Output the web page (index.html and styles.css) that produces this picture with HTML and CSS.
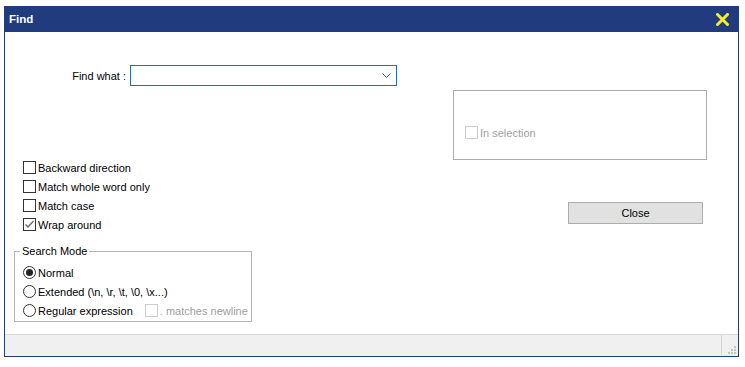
FILE: index.html
```html
<!DOCTYPE html>
<html>
<head>
<meta charset="utf-8">
<link rel="stylesheet" href="styles.css">
</head>
<body>
<div class="window">
  <div class="titlebar">
    <span class="title">Find</span>
    <svg class="xbtn" width="13" height="13" viewBox="0 0 13 13"><path d="M1.5 1.5 L11.5 11.5 M11.5 1.5 L1.5 11.5" stroke="#f7ec2b" stroke-width="3" stroke-linecap="square"/></svg>
  </div>
  <div class="frame">
    <div class="content">
      <div class="left">
        <div class="find-row">
          <span class="find-label">Find what :</span>
          <div class="combo">
            <svg class="chev" width="9" height="6" viewBox="0 0 9 6"><polyline points="0.5,0.5 4.5,4.5 8.5,0.5" fill="none" stroke="#555" stroke-width="1"/></svg>
          </div>
        </div>
        <div class="options">
          <div class="row"><span class="cb"></span><span>Backward direction</span></div>
          <div class="row"><span class="cb"></span><span>Match whole word only</span></div>
          <div class="row"><span class="cb"></span><span>Match case</span></div>
          <div class="row"><span class="cb checked"><svg width="11" height="11" viewBox="0 0 11 11"><polyline points="1.5,5.5 4,8 9.5,2" fill="none" stroke="#6b6b6b" stroke-width="1.4"/></svg></span><span>Wrap around</span></div>
        </div>
        <fieldset class="mode">
          <legend>Search Mode</legend>
          <div class="row"><span class="rb on"></span><span>Normal</span></div>
          <div class="row"><span class="rb"></span><span>Extended (\n, \r, \t, \0, \x...)</span></div>
          <div class="row"><span class="rb"></span><span>Regular expression</span><span class="cb disabled newline"></span><span class="dis">. matches newline</span></div>
        </fieldset>
      </div>
      <div class="right">
        <div class="scope">
          <div class="row"><span class="cb disabled"></span><span class="dis">In selection</span></div>
        </div>
        <button class="close">Close</button>
      </div>
    </div>
    <div class="status">
      <span class="sep"></span>
      <svg class="grip" width="10" height="10" viewBox="0 0 10 10"><g fill="#c4c4c4"><rect x="7" y="1" width="2" height="2"/><rect x="4" y="4" width="2" height="2"/><rect x="7" y="4" width="2" height="2"/><rect x="1" y="7" width="2" height="2"/><rect x="4" y="7" width="2" height="2"/><rect x="7" y="7" width="2" height="2"/></g></svg>
    </div>
  </div>
</div>
</body>
</html>
```
FILE: styles.css
```css
* { box-sizing: border-box; }
html, body { margin: 0; padding: 0; background: #fff; }
body {
  font-family: "Liberation Sans", Arial, sans-serif;
  font-size: 11px;
  color: #000;
}
.window {
  margin: 6px 0 0 4px;
  width: 735px;
  height: 351px;
  display: flex;
  flex-direction: column;
}
.titlebar {
  height: 26px;
  background: #203b7e;
  display: flex;
  align-items: center;
  justify-content: space-between;
  padding: 0 10px 0 5px;
}
.title {
  color: #fff;
  font-weight: bold;
  font-size: 11.5px;
}
.xbtn { display: block; }
.frame {
  flex: 1;
  display: flex;
  flex-direction: column;
  border: 1px solid #203b7e;
  border-top: none;
  width: 735px;
}
.content {
  flex: 1;
  display: flex;
  background: #fff;
}
.left {
  width: 448px;
  display: flex;
  flex-direction: column;
}
.find-row {
  margin-top: 33px;
  display: flex;
  align-items: center;
  height: 21px;
}
.find-label {
  width: 121px;
  text-align: right;
  margin-right: 4px;
}
.combo {
  width: 267px;
  height: 21px;
  border: 1px solid #0078d7;
  background: #fff;
  display: flex;
  align-items: center;
  justify-content: flex-end;
  padding-right: 5px;
}
.chev { display: block; }
.options {
  margin-top: 72px;
  padding-left: 18px;
}
.row {
  height: 19px;
  display: flex;
  align-items: center;
  white-space: nowrap;
}
.cb {
  width: 13px;
  height: 13px;
  border: 1px solid #333;
  background: #fff;
  margin-right: 2px;
  display: flex;
  align-items: center;
  justify-content: center;
  flex: none;
}
.cb svg { display: block; }
.cb.disabled { border-color: #cccccc; }
.dis { color: #a0a0a0; }
.rb {
  width: 13px;
  height: 13px;
  border: 1px solid #333;
  border-radius: 50%;
  background: #fff;
  margin-right: 2px;
  display: flex;
  align-items: center;
  justify-content: center;
  flex: none;
}
.rb.on::after {
  content: "";
  width: 7px;
  height: 7px;
  border-radius: 50%;
  background: #222;
}
.mode {
  margin: 11px 0 0 9px;
  width: 238px;
  border: 1px solid #b4b4b4;
  padding: 5px 0 1px 8px;
  min-width: 0;
}
.mode legend {
  margin-left: -3px;
  padding: 0 2px;
  line-height: 13px;
}
.newline { margin-left: 12px; }
.right {
  display: flex;
  flex-direction: column;
  align-items: flex-start;
}
.scope {
  margin-top: 58px;
  width: 254px;
  height: 70px;
  border: 1px solid #acacac;
  padding: 32px 0 0 11px;
}
.close {
  margin: 42px 0 0 115px;
  width: 135px;
  height: 22px;
  background: #e1e1e1;
  border: 1px solid #adadad;
  font-family: inherit;
  font-size: 11px;
  color: #000;
  padding: 0;
}
.status {
  height: 22px;
  background: #f0f0f0;
  border-top: 1px solid #d9d9d9;
  display: flex;
  align-items: flex-end;
  justify-content: flex-end;
  padding: 0 1px 1px 0;
}
.sep {
  width: 1px;
  height: 20px;
  background: #d4d4d4;
  margin-right: 5px;
  align-self: flex-end;
}
.grip { display: block; }
```
